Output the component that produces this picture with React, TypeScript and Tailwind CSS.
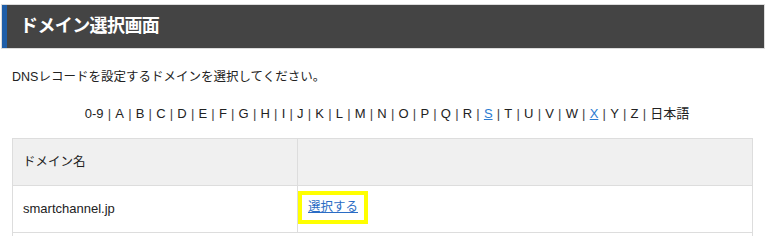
import React from "react";

const letters = "ABCDEFGHIJKLMNOPQRSTUVWXYZ".split("");
const linked = ["S", "X"];

export default function App() {
    const items = ["0-9", ...letters, "日本語"];

    return (
        <div
            className="w-[768px] h-[236px] bg-white overflow-hidden text-[#222]"
            style={{ fontFamily: '"Liberation Sans", "Noto Sans CJK JP", sans-serif' }}
        >
            {/* Title bar */}
            <div className="mt-[4px] ml-[1px] mr-[3px] border border-[#dcdcdc]">
                <div className="h-[43px] bg-[#444444] border-l-[5px] border-[#1f5ea8] flex items-center pl-[13px]">
                    <h1 className="text-white text-[18px] font-bold tracking-[-0.6px]">ドメイン選択画面</h1>
                </div>
            </div>

            <p className="mt-[18px] px-[12px] text-[12.5px] leading-[20px]">
                DNSレコードを設定するドメインを選択してください。
            </p>

            {/* Index */}
            <div className="mt-[17px] flex justify-center gap-[4.2px] text-[13px] leading-[20px] pl-[6px]">
                {items.map((item, i) => (
                    <React.Fragment key={item}>
                        {i > 0 && <span className="text-[#444]">|</span>}
                        {linked.includes(item) ? (
                            <a href="#" className="text-[#2a7bd1] underline">{item}</a>
                        ) : (
                            <span>{item}</span>
                        )}
                    </React.Fragment>
                ))}
            </div>

            {/* Domain table */}
            <div className="mt-[14px] mx-[12px] w-[741px] border border-[#dddddd] text-[12.5px]">
                <div className="grid grid-cols-[285px_1fr] h-[47px] bg-[#f0f0f0] border-b border-[#dddddd]">
                    <div className="flex items-center pl-[10px] border-r border-[#dddddd]">ドメイン名</div>
                    <div />
                </div>
                <div className="grid grid-cols-[285px_1fr] h-[47px] border-b border-[#dddddd]">
                    <div className="flex items-center pl-[10px] border-r border-[#dddddd] text-[13px]">smartchannel.jp</div>
                    <div className="flex items-center pb-[3px]">
                        <div className="border-[4px] border-[#ffff00] px-[6px] h-[33px] flex items-center">
                            <a href="#" className="text-[#2a6cc4] underline">選択する</a>
                        </div>
                    </div>
                </div>
                <div className="h-[20px]" />
            </div>
        </div>
    );
}
